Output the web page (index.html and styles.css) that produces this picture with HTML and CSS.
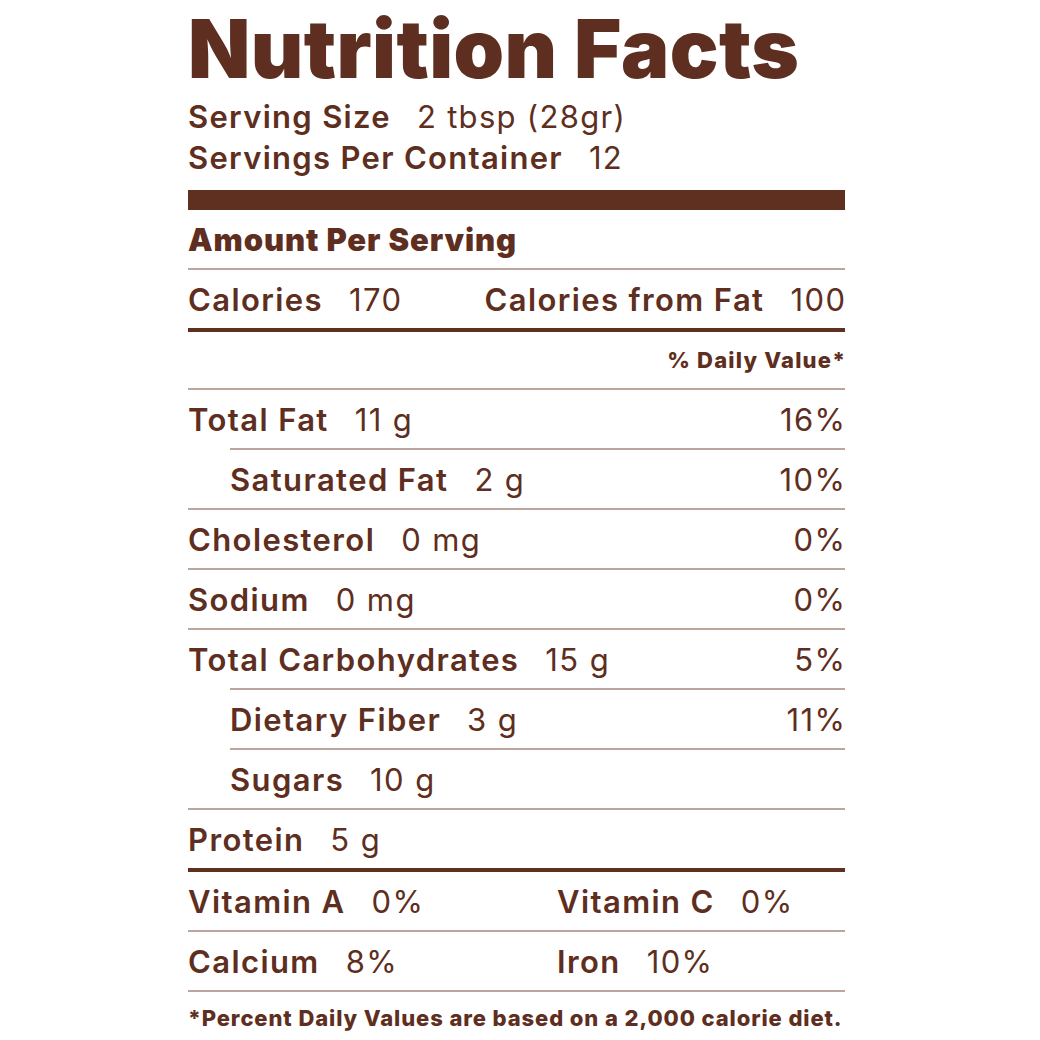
FILE: index.html
```html
<!DOCTYPE html>
<html>
<head>
<meta charset="utf-8">
<link rel="stylesheet" href="styles.css">
</head>
<body>
<div class="label">
  <h1 class="title">Nutrition Facts</h1>
  <div class="serving">
    <div class="line"><span class="lbl">Serving Size</span><span class="val">2 tbsp (28gr)</span></div>
    <div class="line"><span class="lbl">Servings Per Container</span><span class="val">12</span></div>
  </div>
  <div class="bar"></div>
  <div class="row first"><span class="heavy">Amount Per Serving</span></div>
  <div class="row split">
    <div><span class="lbl">Calories</span><span class="val">170</span></div>
    <div class="end"><span class="lbl">Calories from Fat</span><span class="val">100</span></div>
  </div>
  <div class="row thick dv"><span class="heavy small end">% Daily Value*</span></div>
  <div class="row split">
    <div><span class="lbl">Total Fat</span><span class="val">11 g</span></div>
    <span class="pct end">16%</span>
  </div>
  <div class="row split sub">
    <div><span class="lbl">Saturated Fat</span><span class="val">2 g</span></div>
    <span class="pct end">10%</span>
  </div>
  <div class="row split">
    <div><span class="lbl">Cholesterol</span><span class="val">0 mg</span></div>
    <span class="pct end">0%</span>
  </div>
  <div class="row split">
    <div><span class="lbl">Sodium</span><span class="val">0 mg</span></div>
    <span class="pct end">0%</span>
  </div>
  <div class="row split">
    <div><span class="lbl">Total Carbohydrates</span><span class="val">15 g</span></div>
    <span class="pct end">5%</span>
  </div>
  <div class="row split sub">
    <div><span class="lbl">Dietary Fiber</span><span class="val">3 g</span></div>
    <span class="pct end">11%</span>
  </div>
  <div class="row sub">
    <div><span class="lbl">Sugars</span><span class="val">10 g</span></div>
  </div>
  <div class="row">
    <div><span class="lbl">Protein</span><span class="val">5 g</span></div>
  </div>
  <div class="row thick cols">
    <div><span class="lbl">Vitamin A</span><span class="val">0%</span></div>
    <div><span class="lbl">Vitamin C</span><span class="val">0%</span></div>
  </div>
  <div class="row cols">
    <div><span class="lbl">Calcium</span><span class="val">8%</span></div>
    <div><span class="lbl">Iron</span><span class="val">10%</span></div>
  </div>
  <div class="row foot"><span class="heavy note">*Percent Daily Values are based on a 2,000 calorie diet.</span></div>
</div>
</body>
</html>
```

FILE: styles.css
```css
html, body {
  margin: 0;
  padding: 0;
  background: #ffffff;
}

.label {
  width: 657px;
  margin-left: 188px;
  color: #5e2e20;
  font-family: "Inter", "Liberation Sans", sans-serif;
}

.title {
  margin: 0 0 -2px;
  font-size: 81px;
  font-weight: 900;
  line-height: 98px;
  letter-spacing: 0.4px;
  white-space: nowrap;
}

.serving {
  font-size: 31px;
  letter-spacing: 1.3px;
}

.serving .line {
  height: 41px;
  line-height: 41px;
}

.lbl {
  font-weight: 600;
}

.val {
  font-weight: 400;
  margin-left: 26px;
}

.bar {
  margin-top: 12px;
  height: 20px;
  background: #5f2f20;
}

.row {
  height: 58px;
  display: flex;
  align-items: center;
  border-top: 2px solid #bca59c;
  font-size: 31px;
  letter-spacing: 1.4px;
}

.row.first {
  border-top: 0;
}

.row.thick {
  border-top: 4px solid #5f2f20;
}

.row.dv {
  height: 56px;
  justify-content: flex-end;
}

.row.split {
  justify-content: space-between;
}

.row.sub {
  margin-left: 42px;
}

.row.cols {
  display: grid;
  grid-template-columns: 369px 1fr;
  align-items: center;
}

.end {
  margin-right: -1.4px;
}

.heavy {
  font-weight: 900;
  letter-spacing: 0.9px;
}

.small {
  font-size: 22px;
  font-weight: 800;
  letter-spacing: 1.2px;
  margin-right: -1.2px;
}

.note {
  font-size: 22px;
  font-weight: 800;
  letter-spacing: 0.9px;
  white-space: nowrap;
}

.row.foot {
  height: 52px;
}

.pct {
  font-weight: 400;
}
```
